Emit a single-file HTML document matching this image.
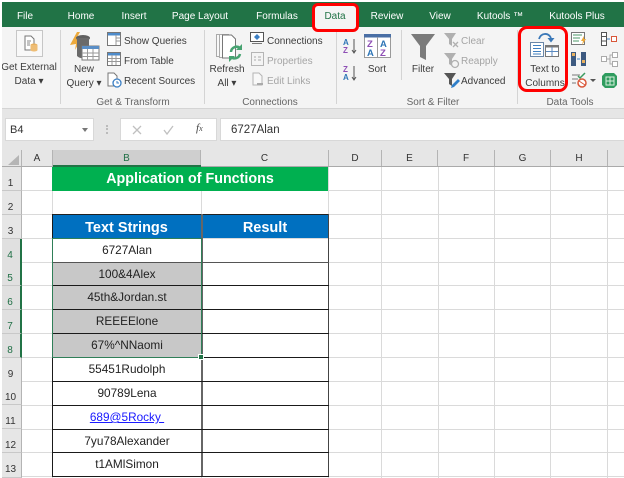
<!DOCTYPE html>
<html><head><meta charset="utf-8"><style>
html,body{margin:0;padding:0;background:#fff}
#p{position:relative;width:624px;height:478px;overflow:hidden;background:#fff;font-family:"Liberation Sans",sans-serif;filter:blur(.3px)}
#p div{position:absolute;white-space:nowrap}
.t{color:#fff;font-size:10px;top:11px;transform:translateX(-50%)}
.r{font-size:10px;color:#3c3c3c;line-height:12px;margin-top:2px}
.g{color:#a5a5a5}
.c{transform:translateX(-50%);text-align:center}
.lb{font-size:10px;color:#666;top:97px;line-height:12px;transform:translateX(-50%)}
.sep{width:1px;background:#d4d4d4;top:30px;height:74px}
.hc{top:150px;height:17px;background:#e6e6e6;border-right:1px solid #b4b4b4;box-sizing:border-box;font-size:10px;color:#333;text-align:center;line-height:18px}
.rh{left:2px;width:20px;background:#e6e6e6;box-sizing:border-box;border-bottom:1px solid #c8c8c8;border-right:1px solid #b4b4b4;font-size:10px;color:#333;text-align:center;height:24px;line-height:33px;padding-right:2px}
.sel{background:#e0e0e0;color:#1f6f45;border-right:2px solid #217346}
.v{width:1px;top:167px;height:311px;background:#dadada}
.h{height:1px;left:22px;width:602px;background:#dadada}
.bl{background:#1a1a1a}
.cell{left:53px;width:148px;height:23px;font-size:11.8px;color:#222;text-align:center;line-height:23px}
svg{position:absolute}
</style></head><body><div id="p">
<div style="left:0;top:0;width:2px;height:478px;background:#fff;z-index:5"></div>
<div style="left:2px;top:2px;width:622px;height:25px;background:#217346"></div>
<div style="left:2px;top:27px;width:622px;height:81px;background:#f4f4f4"></div>
<div style="left:2px;top:108px;width:622px;height:42px;background:#e6e6e6;border-top:1px solid #d4d4d4;box-sizing:border-box"></div>

<div class="t" style="left:25px">File</div>
<div class="t" style="left:81px">Home</div>
<div class="t" style="left:134px">Insert</div>
<div class="t" style="left:200px">Page Layout</div>
<div class="t" style="left:277px">Formulas</div>
<div style="left:312px;top:3px;width:47px;height:29px;background:#f4f4f4;border:3px solid #f00;border-radius:6px;box-sizing:border-box;z-index:3"></div>
<div class="t" style="left:335px;color:#217346;z-index:4">Data</div>
<div class="t" style="left:387px">Review</div>
<div class="t" style="left:440px">View</div>
<div class="t" style="left:500px">Kutools ™</div>
<div class="t" style="left:577px">Kutools Plus</div>

<!-- Get External -->
<div style="left:16px;top:30px;width:27px;height:27px;border:1px solid #c6c6c6;background:#f8f8f8;box-sizing:border-box"></div>
<svg style="left:22px;top:35px" width="18" height="18" viewBox="0 0 18 18"><path d="M3 1h6l3 3v11H3z" fill="#fff" stroke="#777"/><path d="M5 6h4M5 8h3M5 10h3" stroke="#888"/><ellipse cx="12" cy="10" rx="3.5" ry="1.5" fill="#e9b15f"/><path d="M8.5 10v5c0 2 7 2 7 0v-5z" fill="#eebd75"/></svg>
<div class="r c" style="left:29px;top:60px">Get External</div>
<div class="r c" style="left:29px;top:74px">Data ▾</div>
<div class="sep" style="left:60px"></div>
<!-- New Query -->
<svg style="left:68px;top:30px" width="32" height="32" viewBox="0 0 32 32"><path d="M9 2L2 15l6-1-1 6 7-12-6 1 4-7z" fill="#eda93a"/><ellipse cx="15" cy="8" rx="7" ry="3" fill="#5f5f5f"/><path d="M9 8h12v18c-3 3-9 3-12 0z" fill="#6a6a6a"/><rect x="14" y="16" width="17" height="14" fill="#fff" stroke="#7a7a7a"/><rect x="14" y="16" width="17" height="3" fill="#5a8ec6"/><path d="M14 23h17M14 26.500h17M19.500 19v11M25 19v11" stroke="#9a9a9a"/></svg>
<div class="r c" style="left:84px;top:62px">New</div>
<div class="r c" style="left:84px;top:76px">Query ▾</div>
<svg style="left:107px;top:32px" width="14" height="14" viewBox="0 0 14 14"><rect x=".5" y=".5" width="13" height="13" fill="#fff" stroke="#777"/><rect x="1" y="1" width="12" height="2.500" fill="#4f8ccb"/><path d="M9 3v10M9 6h4M9 9h4" stroke="#999"/></svg>
<svg style="left:107px;top:52px" width="14" height="14" viewBox="0 0 14 14"><rect x=".5" y=".5" width="13" height="13" fill="#fff" stroke="#777"/><rect x="1" y="1" width="12" height="2.500" fill="#4f8ccb"/><path d="M1 6.500h12M1 9.500h12M5 3v10M9 3v10" stroke="#999"/></svg>
<svg style="left:107px;top:72px" width="15" height="16" viewBox="0 0 15 16"><path d="M1 1h6l3 3v10H1z" fill="#fff" stroke="#777"/><circle cx="10" cy="11" r="4" fill="#fff" stroke="#3b7fc4" stroke-width="1.300"/><path d="M10 9v2h2" stroke="#3b7fc4" fill="none"/></svg>
<div class="r" style="left:124px;top:34px">Show Queries</div>
<div class="r" style="left:124px;top:54px">From Table</div>
<div class="r" style="left:124px;top:74px">Recent Sources</div>
<div class="lb" style="left:133px">Get &amp; Transform</div>
<div class="sep" style="left:204px"></div>
<!-- Refresh -->
<svg style="left:215px;top:33px" width="30" height="30" viewBox="0 0 30 30"><path d="M1.500 1.500h9v22h-9z" fill="#f8f8f8" stroke="#aaa"/><path d="M4.500 1.500h9v23h-9z" fill="#fbfbfb" stroke="#aaa"/><path d="M7.500 2h9l4 4v19h-13z" fill="#fff" stroke="#777"/><path d="M16 19a5.500 5.500 0 0 1 9-4M25 21a5.500 5.500 0 0 1-9 3" fill="none" stroke="#47a371" stroke-width="2.500"/><path d="M27 11v6h-6zM14 29v-6h6z" fill="#47a371"/></svg>
<div class="r c" style="left:227px;top:62px">Refresh</div>
<div class="r c" style="left:227px;top:76px">All ▾</div>
<svg style="left:250px;top:32px" width="14" height="13" viewBox="0 0 14 13"><rect x=".5" y=".5" width="13" height="9" fill="#fff" stroke="#555"/><path d="M7 2l3 3-3 3-3-3z" fill="#3b7fc4"/><path d="M2 11.500h10" stroke="#777"/></svg>
<svg style="left:251px;top:52px" width="13" height="14" viewBox="0 0 13 14"><rect x=".5" y=".5" width="12" height="13" fill="#f4f4f4" stroke="#b5b5b5"/><path d="M3 5h2M7 5h3M3 8h2M7 8h3" stroke="#aaa"/></svg>
<svg style="left:252px;top:72px" width="13" height="15" viewBox="0 0 13 15"><path d="M1 1h6l3 3v9H1z" fill="#f8f8f8" stroke="#b5b5b5"/><path d="M5 12h6" stroke="#aaa" stroke-width="2"/></svg>
<div class="r" style="left:267px;top:34px">Connections</div>
<div class="r g" style="left:267px;top:54px">Properties</div>
<div class="r g" style="left:267px;top:74px">Edit Links</div>
<div class="lb" style="left:270px">Connections</div>
<div class="sep" style="left:336px"></div>
<!-- Sort -->
<svg style="left:343px;top:37px" width="16" height="18" viewBox="0 0 16 18"><text x="0" y="8" font-size="8" font-weight="bold" fill="#2e75b6" font-family="Liberation Sans">A</text><text x="0" y="16" font-size="8" font-weight="bold" fill="#8e4fb5" font-family="Liberation Sans">Z</text><path d="M11 2v14M9 13l2 3 2-3" stroke="#555" fill="none"/></svg>
<svg style="left:343px;top:64px" width="16" height="18" viewBox="0 0 16 18"><text x="0" y="8" font-size="8" font-weight="bold" fill="#8e4fb5" font-family="Liberation Sans">Z</text><text x="0" y="16" font-size="8" font-weight="bold" fill="#2e75b6" font-family="Liberation Sans">A</text><path d="M11 2v14M9 13l2 3 2-3" stroke="#555" fill="none"/></svg>
<svg style="left:364px;top:34px" width="27" height="24" viewBox="0 0 27 24"><rect x=".5" y=".5" width="26" height="23" fill="#fff" stroke="#9a9a9a"/><rect x="0" y="0" width="27" height="3.500" fill="#4a6fa5"/><path d="M13.500 3v21" stroke="#9a9a9a"/><text x="3" y="13" font-size="9.500" font-weight="bold" fill="#8e4fb5" font-family="Liberation Sans">Z</text><text x="3" y="22" font-size="9.500" font-weight="bold" fill="#2e75b6" font-family="Liberation Sans">A</text><text x="16" y="13" font-size="9.500" font-weight="bold" fill="#2e75b6" font-family="Liberation Sans">A</text><text x="16" y="22" font-size="9.500" font-weight="bold" fill="#8e4fb5" font-family="Liberation Sans">Z</text></svg>
<div class="r c" style="left:377px;top:62px">Sort</div>
<div class="sep" style="left:401px;height:50px"></div>
<!-- Filter -->
<svg style="left:410px;top:33px" width="26" height="28" viewBox="0 0 26 28"><path d="M1 1h24L16 13v14l-6-3V13z" fill="#7b7b7b"/></svg>
<div class="r c" style="left:423px;top:62px">Filter</div>
<svg style="left:444px;top:33px" width="16" height="15" viewBox="0 0 16 15"><path d="M0 0h12L8 6v7l-3-2V6z" fill="#b0b0b0"/><path d="M9 9l5 5M14 9l-5 5" stroke="#b0b0b0" stroke-width="1.300"/></svg>
<svg style="left:444px;top:53px" width="16" height="16" viewBox="0 0 16 16"><path d="M0 0h12L8 6v7l-3-2V6z" fill="#b0b0b0"/><circle cx="11" cy="11" r="3.500" fill="none" stroke="#b0b0b0" stroke-width="1.300"/></svg>
<svg style="left:444px;top:73px" width="17" height="16" viewBox="0 0 17 16"><path d="M0 0h12L8 6v7l-3-2V6z" fill="#555"/><path d="M7 15l1-3 6-6 2 2-6 6z" fill="#2f7fc9"/></svg>
<div class="r g" style="left:461px;top:34px">Clear</div>
<div class="r g" style="left:461px;top:54px">Reapply</div>
<div class="r" style="left:461px;top:74px">Advanced</div>
<div class="lb" style="left:433px">Sort &amp; Filter</div>
<div class="sep" style="left:517px"></div>
<!-- Text to columns -->
<svg style="left:530px;top:32px" width="30" height="26" viewBox="0 0 30 26"><rect x=".5" y="10.500" width="13" height="14" fill="#fff" stroke="#6b87a8"/><path d="M3 13.500h8M3 16.500h8M3 19.500h8M3 22h8" stroke="#3f7fc0"/><rect x="15.500" y="13.500" width="13" height="11" fill="#fff" stroke="#777"/><rect x="15" y="13" width="14" height="2.500" fill="#777"/><path d="M22 15v9M16 19.500h12" stroke="#5b8ac0"/><path d="M9 7C11 1 18 0 21 6" fill="none" stroke="#3a78b8" stroke-width="1.800"/><path d="M17.500 6h7L21 10.500z" fill="#3a78b8"/></svg>
<div class="r c" style="left:545px;top:62px">Text to</div>
<div class="r c" style="left:545px;top:76px">Columns</div>
<div style="left:518px;top:26px;width:50px;height:66px;border:3px solid #f00;border-radius:9px;box-sizing:border-box;z-index:3"></div>
<svg style="left:571px;top:32px" width="16" height="14" viewBox="0 0 16 14"><rect x=".5" y=".5" width="13" height="12" fill="#fff" stroke="#777"/><path d="M2 3h9M2 6h7M2 9h6" stroke="#4c9a6a"/><path d="M13 4l-3 5h2l-1 4 4-6h-2z" fill="#eda93a"/></svg>
<svg style="left:571px;top:52px" width="15" height="14" viewBox="0 0 15 14"><rect x="0" y="0" width="5" height="14" fill="#3d5a80"/><rect x="10" y="0" width="5" height="14" fill="#3d5a80"/><rect x="1" y="1" width="3" height="3" fill="#e9b15f"/><rect x="11" y="8" width="3" height="3" fill="#e9b15f"/><path d="M6 7h3" stroke="#3b7fc4"/></svg>
<svg style="left:571px;top:72px" width="16" height="16" viewBox="0 0 16 16"><path d="M1 3h8M1 7h6M1 11h4" stroke="#777"/><path d="M7 4l2 2 5-5" fill="none" stroke="#3c9a5f" stroke-width="1.500"/><circle cx="11" cy="11" r="4" fill="#fff" stroke="#d9573a" stroke-width="1.500"/><path d="M8 9l6 4" stroke="#d9573a"/></svg>
<div style="left:590px;top:79px;border:3px solid transparent;border-top:3px solid #555"></div>
<svg style="left:601px;top:32px" width="16" height="14" viewBox="0 0 16 14"><rect x=".5" y=".5" width="5" height="13" fill="#fff" stroke="#555"/><path d="M.5 4.500h5M.5 9h5" stroke="#555"/><path d="M6 7h3" stroke="#3b7fc4"/><rect x="10.500" y="4.500" width="5" height="5" fill="#fff" stroke="#d9573a"/></svg>
<svg style="left:601px;top:52px" width="17" height="15" viewBox="0 0 17 15"><rect x=".5" y="4.500" width="5" height="5" fill="#fff" stroke="#aaa"/><rect x="11.500" y=".5" width="5" height="5" fill="#fff" stroke="#aaa"/><rect x="11.500" y="9.500" width="5" height="5" fill="#fff" stroke="#aaa"/><path d="M6 7h3v-4h2M9 7v5h2" fill="none" stroke="#aaa"/></svg>
<svg style="left:601px;top:72px" width="17" height="17" viewBox="0 0 17 17"><path d="M4 1h9l3 3v9l-3 3H4l-3-3V4z" fill="#2f9c5f"/><path d="M5 5h8v8H5zM5 9h8M9 5v8" fill="none" stroke="#d8eedd"/></svg>
<div class="lb" style="left:570px">Data Tools</div>

<!-- Formula bar -->
<div style="left:5px;top:118px;width:89px;height:23px;background:#fff;border:1px solid #d8d8d8;box-sizing:border-box;font-size:11px;color:#333;line-height:22px;padding-left:4px">B4</div>
<div style="left:82px;top:128px;border:3.500px solid transparent;border-top:4px solid #777"></div>
<div style="left:106px;top:125px;width:2px;height:9px;border-left:2px dotted #bbb"></div>
<div style="left:120px;top:118px;width:97px;height:23px;background:#fff;border:1px solid #d8d8d8;box-sizing:border-box"></div>
<svg style="left:131px;top:124px" width="50" height="12" viewBox="0 0 50 12"><path d="M2 2l8 8M10 2l-8 8" stroke="#c0c0c0" stroke-width="1.300"/><path d="M33 6l3 4 6-8" stroke="#c0c0c0" stroke-width="1.300" fill="none"/></svg>
<div style="left:196px;top:122px;font:italic 11px 'Liberation Serif',serif;color:#444">f<span style="font-size:8px">x</span></div>
<div style="left:220px;top:118px;width:404px;height:23px;background:#fff;border:1px solid #d8d8d8;border-right:0;box-sizing:border-box;font-size:11.500px;color:#333;line-height:22px;padding-left:10px">6727Alan</div>

<!-- Column headers -->
<div style="left:2px;top:150px;width:20px;height:17px;background:#e6e6e6;border-right:1px solid #b4b4b4;border-bottom:1px solid #aaa;box-sizing:border-box"></div>
<svg style="left:6px;top:155px" width="14" height="11"><path d="M13 0v10H2z" fill="#b5b5b5"/></svg>
<div class="hc" style="left:22px;width:31px">A</div>
<div class="hc" style="left:53px;width:148px;background:#cfcfcf;color:#1f6f45;border-bottom:2px solid #217346">B</div>
<div class="hc" style="left:201px;width:128px">C</div>
<div class="hc" style="left:329px;width:53px">D</div>
<div class="hc" style="left:382px;width:56px">E</div>
<div class="hc" style="left:438px;width:57px">F</div>
<div class="hc" style="left:495px;width:56px">G</div>
<div class="hc" style="left:551px;width:57px">H</div>
<div class="hc" style="left:608px;width:16px;border-right:0"></div>
<div style="left:22px;top:166px;width:602px;height:1px;background:#aaa"></div>
<div style="left:53px;top:165px;width:148px;height:2px;background:#217346"></div>

<!-- Row headers -->
<div class="rh" style="top:167px">1</div>
<div class="rh" style="top:191px">2</div>
<div class="rh" style="top:215px">3</div>
<div class="rh sel" style="top:239px">4</div>
<div class="rh sel" style="top:262px">5</div>
<div class="rh sel" style="top:286px">6</div>
<div class="rh sel" style="top:310px">7</div>
<div class="rh sel" style="top:334px">8</div>
<div class="rh" style="top:358px">9</div>
<div class="rh" style="top:381px">10</div>
<div class="rh" style="top:405px">11</div>
<div class="rh" style="top:429px">12</div>
<div class="rh" style="top:453px;height:25px">13</div>

<!-- Gridlines -->
<div class="v" style="left:52px"></div><div class="v" style="left:201px"></div><div class="v" style="left:328px"></div><div class="v" style="left:381px"></div><div class="v" style="left:438px"></div><div class="v" style="left:494px"></div><div class="v" style="left:550px"></div><div class="v" style="left:607px"></div>
<div class="h" style="top:190px"></div><div class="h" style="top:214px"></div><div class="h" style="top:238px"></div><div class="h" style="top:262px"></div><div class="h" style="top:285px"></div><div class="h" style="top:309px"></div><div class="h" style="top:333px"></div><div class="h" style="top:357px"></div><div class="h" style="top:381px"></div><div class="h" style="top:405px"></div><div class="h" style="top:429px"></div><div class="h" style="top:452px"></div><div class="h" style="top:476px"></div>

<!-- Title -->
<div style="left:52px;top:167px;width:276px;height:24px;background:#00b050;color:#fff;font-weight:bold;font-size:14.300px;text-align:center;line-height:25px">Application of Functions</div>
<!-- Table header -->
<div style="left:52px;top:214px;width:149px;height:24px;background:#0070c0;color:#fff;font-weight:bold;font-size:14.500px;text-align:center;line-height:26px;box-sizing:border-box;border-top:1px solid #222">Text Strings</div>
<div style="left:201px;top:214px;width:128px;height:24px;background:#0070c0;color:#fff;font-weight:bold;font-size:14.500px;text-align:center;line-height:26px;box-sizing:border-box;border-top:1px solid #222">Result</div>

<!-- Cells -->
<div class="cell" style="top:239px">6727Alan</div>
<div class="cell" style="top:263px;background:#c8c8c8">100&amp;4Alex</div>
<div class="cell" style="top:286px;height:24px;background:#c8c8c8">45th&amp;Jordan.st</div>
<div class="cell" style="top:310px;height:24px;background:#c8c8c8">REEEElone</div>
<div class="cell" style="top:334px;background:#c8c8c8">67%^NNaomi</div>
<div class="cell" style="top:358px">55451Rudolph</div>
<div class="cell" style="top:382px">90789Lena</div>
<div class="cell" style="top:406px;color:#1a1aff"><u>689@5Rocky&nbsp;</u></div>
<div class="cell" style="top:430px">7yu78Alexander</div>
<div class="cell" style="top:453px">t1AMlSimon</div>

<!-- Table borders -->
<div class="bl" style="left:52px;top:214px;width:1px;height:263px"></div>
<div class="bl" style="left:201px;top:214px;width:2px;height:263px;background:#666"></div>
<div class="bl" style="left:328px;top:214px;width:1px;height:263px;background:#444"></div>
<div class="bl" style="left:52px;top:262px;width:277px;height:1px;background:#555"></div>
<div class="bl" style="left:52px;top:285px;width:277px;height:1px"></div>
<div class="bl" style="left:52px;top:309px;width:277px;height:1px"></div>
<div class="bl" style="left:52px;top:333px;width:277px;height:1px"></div>
<div class="bl" style="left:52px;top:357px;width:277px;height:1px"></div>
<div class="bl" style="left:52px;top:381px;width:277px;height:1px"></div>
<div class="bl" style="left:52px;top:405px;width:277px;height:1px"></div>
<div class="bl" style="left:52px;top:429px;width:277px;height:1px"></div>
<div class="bl" style="left:52px;top:452px;width:277px;height:1px"></div>
<div class="bl" style="left:52px;top:476px;width:277px;height:1px"></div>
<!-- Selection -->
<div style="left:52px;top:238px;width:150px;height:120px;border:1px solid #2f7f58;box-sizing:border-box"></div>
<div style="left:198px;top:354px;width:4px;height:4px;background:#217346;border:1px solid #fff"></div>
</div></body></html>
